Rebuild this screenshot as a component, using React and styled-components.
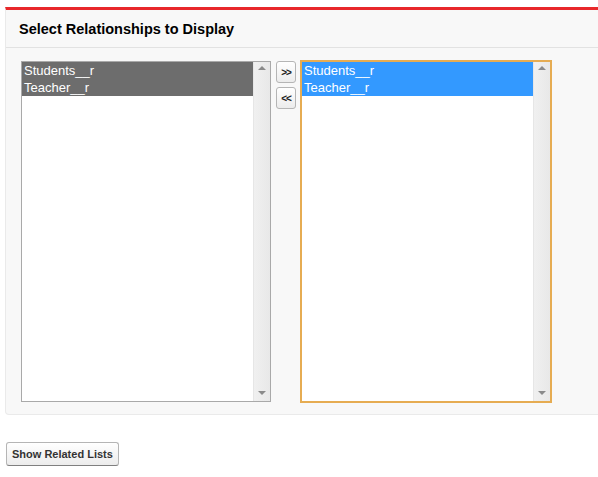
import React from 'react'
import styled, { createGlobalStyle } from 'styled-components'

const GlobalStyle = createGlobalStyle`
  body {
    margin: 0;
    background: #fff;
    font-family: 'Liberation Sans', Arial, sans-serif;
  }
  * {
    box-sizing: border-box;
  }
`

const Page = styled.div`
  padding: 7px 0 0 5px;
`

const Panel = styled.section`
  background: #f8f8f8;
  border: 1px solid #eaeaea;
  border-right: none;
  border-top: 3px solid #e8282b;
  border-radius: 0 0 0 4px;
`

const PanelHeader = styled.h2`
  margin: 0;
  height: 38px;
  display: flex;
  align-items: center;
  padding-left: 13px;
  font-size: 14.5px;
  font-weight: bold;
  color: #000;
  border-bottom: 1px solid #e2e2e2;
`

const PanelBody = styled.div`
  display: flex;
  align-items: flex-start;
  padding: 13px 15px 11px 15px;
`

const ListBox = styled.div`
  width: ${(p) => (p.$focused ? '252px' : '250px')};
  height: ${(p) => (p.$focused ? '343px' : '341px')};
  margin-top: ${(p) => (p.$focused ? '-1px' : '0')};
  display: flex;
  background: #fff;
  border: ${(p) => (p.$focused ? '2px solid #e6ac52' : '1px solid #a9a9a9')};
`

const Options = styled.ul`
  flex: 1;
  margin: 0;
  padding: 0;
  list-style: none;
`

const Option = styled.li`
  height: 17px;
  line-height: 17px;
  padding-left: 2px;
  font-size: 13px;
  color: #fff;
  background: ${(p) => p.$bg};
`

const Scrollbar = styled.div`
  width: 17px;
  display: flex;
  flex-direction: column;
  justify-content: space-between;
  align-items: center;
  background: linear-gradient(to right, #f0f0f0, #e8e8e8);
  border-left: 1px solid #e6e6e6;
  padding: 4px 0 6px;
`

const Arrow = styled.span`
  width: 0;
  height: 0;
  border-left: 4px solid transparent;
  border-right: 4px solid transparent;
  ${(p) =>
    p.$down
      ? 'border-top: 4px solid #8a8a8a;'
      : 'border-bottom: 4px solid #8a8a8a;'}
`

const Mover = styled.div`
  display: flex;
  flex-direction: column;
  gap: 4px;
  margin: 0 4px 0 5px;
`

const SmallButton = styled.button`
  width: 20px;
  height: 22px;
  padding: 0;
  font-family: 'Liberation Sans', Arial, sans-serif;
  font-size: 10px;
  font-weight: bold;
  letter-spacing: -1px;
  color: #222;
  background: linear-gradient(#fff, #ececec);
  border: 1px solid #b5b5b5;
  border-radius: 3px;
`

const ActionButton = styled.button`
  margin: 27px 0 0 6px;
  height: 24px;
  padding: 0 5px;
  font-family: 'Liberation Sans', Arial, sans-serif;
  font-size: 11px;
  font-weight: bold;
  color: #333;
  background: linear-gradient(#fff, #ececec);
  border: 1px solid #b5b5b5;
  border-bottom-color: #7f7f7f;
  border-radius: 3px;
`

const items = ['Students__r', 'Teacher__r']

function Select({ color, focused }) {
  return (
    <ListBox $focused={focused}>
      <Options>
        {items.map((name) => (
          <Option key={name} $bg={color}>
            {name}
          </Option>
        ))}
      </Options>
      <Scrollbar>
        <Arrow />
        <Arrow $down />
      </Scrollbar>
    </ListBox>
  )
}

export default function App() {
  return (
    <>
      <GlobalStyle />
      <Page>
        <Panel>
          <PanelHeader>Select Relationships to Display</PanelHeader>
          <PanelBody>
            <Select color='#6d6d6d' />
            <Mover>
              <SmallButton>&gt;&gt;</SmallButton>
              <SmallButton>&lt;&lt;</SmallButton>
            </Mover>
            <Select color='#3399ff' focused />
          </PanelBody>
        </Panel>
      </Page>
      <ActionButton>Show Related Lists</ActionButton>
    </>
  )
}
